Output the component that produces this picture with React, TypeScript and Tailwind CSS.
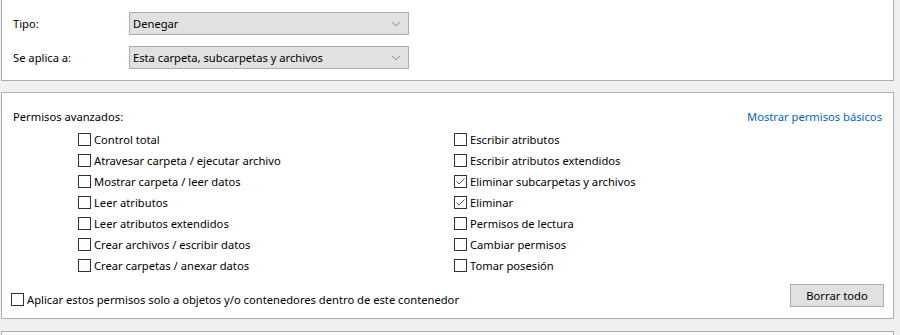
import { ChevronDown } from "lucide-react"

const leftPerms = [
  { name: "Control total", checked: false },
  { name: "Atravesar carpeta / ejecutar archivo", checked: false },
  { name: "Mostrar carpeta / leer datos", checked: false },
  { name: "Leer atributos", checked: false },
  { name: "Leer atributos extendidos", checked: false },
  { name: "Crear archivos / escribir datos", checked: false },
  { name: "Crear carpetas / anexar datos", checked: false },
]

const rightPerms = [
  { name: "Escribir atributos", checked: false },
  { name: "Escribir atributos extendidos", checked: false },
  { name: "Eliminar subcarpetas y archivos", checked: true },
  { name: "Eliminar", checked: true },
  { name: "Permisos de lectura", checked: false },
  { name: "Cambiar permisos", checked: false },
  { name: "Tomar posesión", checked: false },
]

function Checkbox({ checked }: { checked: boolean }) {
  return (
    <span className="flex h-[13px] w-[13px] shrink-0 items-center justify-center border border-[#333333] bg-white">
      {checked && (
        <svg width="11" height="11" viewBox="0 0 11 11" fill="none">
          <path d="M1.5 5.5 L4 8 L9.5 2.5" stroke="#555555" strokeWidth="1" />
        </svg>
      )}
    </span>
  )
}

function CheckRow({ name, checked }: { name: string; checked: boolean }) {
  return (
    <label className="flex h-[21px] items-center gap-[3px]">
      <Checkbox checked={checked} />
      <span>{name}</span>
    </label>
  )
}

function Select({ value }: { value: string }) {
  return (
    <div className="flex h-[23px] w-[280px] items-center justify-between border border-[#adadad] bg-[#e1e1e1] pl-[3px] pr-[5px]">
      <span>{value}</span>
      <ChevronDown className="h-[14px] w-[14px] text-[#606060]" strokeWidth={1.25} />
    </div>
  )
}

export default function App() {
  return (
    <div
      className="h-[335px] w-[900px] overflow-hidden bg-[#f0f0f0] text-[11.2px] leading-4 text-black"
      style={{ fontFamily: '"Noto Sans", "Open Sans", sans-serif' }}
    >
      {/* Tipo / Se aplica a */}
      <div className="ml-px w-[893px] border-x border-b border-[#adadad] bg-white px-[11px] pb-[11px] pt-3">
        <div className="flex items-center">
          <span className="w-[116px]">Tipo:</span>
          <Select value="Denegar" />
        </div>
        <div className="mt-[11px] flex items-center">
          <span className="w-[116px]">Se aplica a:</span>
          <Select value="Esta carpeta, subcarpetas y archivos" />
        </div>
      </div>

      {/* Permisos avanzados */}
      <div className="ml-px mt-[11px] w-[893px] border border-[#adadad] bg-white px-[9px] pb-[11px] pt-4">
        <div className="flex items-center justify-between pl-[2px] pr-[2px]">
          <span>Permisos avanzados:</span>
          <span className="text-[#0066cc]">Mostrar permisos básicos</span>
        </div>
        <div className="mt-1 grid grid-cols-[376px_1fr] pl-[67px]">
          <div>
            {leftPerms.map((p) => (
              <CheckRow key={p.name} name={p.name} checked={p.checked} />
            ))}
          </div>
          <div>
            {rightPerms.map((p) => (
              <CheckRow key={p.name} name={p.name} checked={p.checked} />
            ))}
          </div>
        </div>
        <div className="mt-2 flex items-end justify-between">
          <label className="flex h-[15px] items-center gap-[3px]">
            <Checkbox checked={false} />
            <span>Aplicar estos permisos solo a objetos y/o contenedores dentro de este contenedor</span>
          </label>
          <button className="h-[23px] w-[94px] border border-[#adadad] bg-[#e1e1e1]">Borrar todo</button>
        </div>
      </div>

      <div className="ml-px mt-3 h-10 w-[893px] border border-[#adadad] bg-white" />
    </div>
  )
}
